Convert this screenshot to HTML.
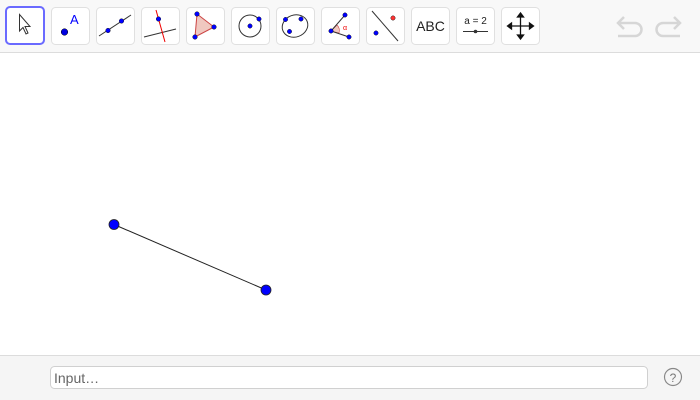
<!DOCTYPE html>
<html><head><meta charset="utf-8"><style>
html,body{margin:0;padding:0;width:700px;height:400px;overflow:hidden;background:#fff;font-family:"Liberation Sans",sans-serif}
</style></head><body>
<svg width="700" height="400" xmlns="http://www.w3.org/2000/svg" font-family="Liberation Sans, sans-serif">
<rect x="0" y="0" width="700" height="52" fill="#f8f8f8"/>
<line x1="0" y1="52.5" x2="700" y2="52.5" stroke="#dcdcdc"/>
<g fill="#fff" stroke="#e0e0e0">
<rect x="51.5" y="7.5" width="38" height="37" rx="4"/>
<rect x="96.5" y="7.5" width="38" height="37" rx="4"/>
<rect x="141.5" y="7.5" width="38" height="37" rx="4"/>
<rect x="186.5" y="7.5" width="38" height="37" rx="4"/>
<rect x="231.5" y="7.5" width="38" height="37" rx="4"/>
<rect x="276.5" y="7.5" width="38" height="37" rx="4"/>
<rect x="321.5" y="7.5" width="38" height="37" rx="4"/>
<rect x="366.5" y="7.5" width="38" height="37" rx="4"/>
<rect x="411.5" y="7.5" width="38" height="37" rx="4"/>
<rect x="456.5" y="7.5" width="38" height="37" rx="4"/>
<rect x="501.5" y="7.5" width="38" height="37" rx="4"/>
</g>
<rect x="6" y="7" width="38" height="37" rx="4" fill="#fff" stroke="#6a6aff" stroke-width="2"/>
<!-- cursor -->
<path d="M19.5 14.5 L19.5 31 L23 27.5 L26 34 L28 33 L25 26.5 L30 26.5 Z" fill="#fff" stroke="#333" stroke-width="1"/>
<!-- point A -->
<circle cx="64.5" cy="32" r="3.3" fill="#0000e0" stroke="#000" stroke-width=".5"/>
<text x="70" y="24" font-size="13" fill="#0000ff">A</text>
<!-- line through 2 points -->
<line x1="99" y1="36" x2="131" y2="15" stroke="#333"/>
<circle cx="108" cy="30.5" r="2.3" fill="#00f" stroke="#000" stroke-width=".4"/>
<circle cx="121.5" cy="21" r="2.3" fill="#00f" stroke="#000" stroke-width=".4"/>
<!-- perpendicular -->
<line x1="144" y1="37" x2="176" y2="29" stroke="#333"/>
<line x1="156" y1="10" x2="165" y2="42" stroke="#e00"/>
<circle cx="158.5" cy="19" r="2.3" fill="#00f" stroke="#000" stroke-width=".4"/>
<!-- polygon -->
<path d="M197 14 L214 27 L195 37 Z" fill="#f0c8c0" stroke="#c44" stroke-width="1"/>
<circle cx="197" cy="14" r="2.3" fill="#00f" stroke="#000" stroke-width=".4"/>
<circle cx="214" cy="27" r="2.3" fill="#00f" stroke="#000" stroke-width=".4"/>
<circle cx="195" cy="37" r="2.3" fill="#00f" stroke="#000" stroke-width=".4"/>
<!-- circle -->
<circle cx="250" cy="26" r="11" fill="none" stroke="#333"/>
<circle cx="250" cy="26" r="2.2" fill="#00f" stroke="#000" stroke-width=".4"/>
<circle cx="259" cy="19" r="2.2" fill="#00f" stroke="#000" stroke-width=".4"/>
<!-- conic -->
<ellipse cx="295" cy="26" rx="13" ry="11" transform="rotate(-20 295 26)" fill="none" stroke="#333"/>
<circle cx="285.5" cy="19.5" r="2.2" fill="#00f" stroke="#000" stroke-width=".4"/>
<circle cx="301" cy="19" r="2.2" fill="#00f" stroke="#000" stroke-width=".4"/>
<circle cx="289.5" cy="31.5" r="2.2" fill="#00f" stroke="#000" stroke-width=".4"/>
<!-- angle -->
<path d="M331 31 L337 25 A8 8 0 0 1 339 33 Z" fill="#f0c8c0" stroke="#c44" stroke-width=".6"/>
<path d="M345 15 L331 31 L349 37" fill="none" stroke="#333"/>
<circle cx="345" cy="15" r="2.2" fill="#00f" stroke="#000" stroke-width=".4"/>
<circle cx="331" cy="31" r="2.2" fill="#00f" stroke="#000" stroke-width=".4"/>
<circle cx="349" cy="37" r="2.2" fill="#00f" stroke="#000" stroke-width=".4"/>
<text x="343" y="30" font-size="7" fill="#e00">α</text>
<!-- reflect / dist -->
<line x1="372" y1="11" x2="398" y2="41" stroke="#333"/>
<circle cx="393" cy="18" r="2.2" fill="#f33" stroke="#000" stroke-width=".4"/>
<circle cx="376" cy="33" r="2.2" fill="#00f" stroke="#000" stroke-width=".4"/>
<!-- ABC -->
<text x="430.5" y="31" font-size="14" text-anchor="middle" fill="#222">ABC</text>
<!-- slider -->
<text x="475.5" y="24" font-size="10" text-anchor="middle" fill="#222">a = 2</text>
<line x1="463" y1="31.5" x2="488" y2="31.5" stroke="#333"/>
<circle cx="475.5" cy="31.5" r="1.8" fill="#333"/>
<!-- move -->
<g stroke="#111" stroke-width="1.3" fill="#111">
<line x1="520.5" y1="15" x2="520.5" y2="37"/><line x1="509" y1="26" x2="532" y2="26"/>
<path d="M520.5 13 L517.5 17 L523.5 17 Z"/><path d="M520.5 39 L517.5 35 L523.5 35 Z"/>
<path d="M507.5 26 L511.5 23 L511.5 29 Z"/><path d="M533.5 26 L529.5 23 L529.5 29 Z"/>
</g>
<!-- undo/redo -->
<g fill="none" stroke="#d6d6d6" stroke-width="2.5">
<path d="M620 23 H635 A6.5 6.5 0 0 1 635 36 H618"/><path d="M624 17 L618 23 L624 29"/>
<path d="M678 23 H663 A6.5 6.5 0 0 0 663 36 H680"/><path d="M674 17 L680 23 L674 29"/>
</g>
<!-- segment -->
<line x1="114" y1="224.5" x2="266" y2="290" stroke="#222" stroke-width="1"/>
<circle cx="114" cy="224.5" r="5" fill="#0000ff" stroke="#222" stroke-width=".8"/>
<circle cx="266" cy="290" r="5" fill="#0000ff" stroke="#222" stroke-width=".8"/>
<!-- bottom -->
<rect x="0" y="355" width="700" height="45" fill="#f5f5f5"/>
<line x1="0" y1="355.5" x2="700" y2="355.5" stroke="#dcdcdc"/>
<rect x="50.5" y="366.5" width="597" height="22" rx="4" fill="#fff" stroke="#d0d0d0"/>
<text x="54" y="383" font-size="14" fill="#666">Input…</text>
<circle cx="673" cy="377" r="8.5" fill="none" stroke="#888" stroke-width="1.2"/>
<text x="673" y="382" font-size="12" text-anchor="middle" fill="#777">?</text>
</svg>
</body></html>
